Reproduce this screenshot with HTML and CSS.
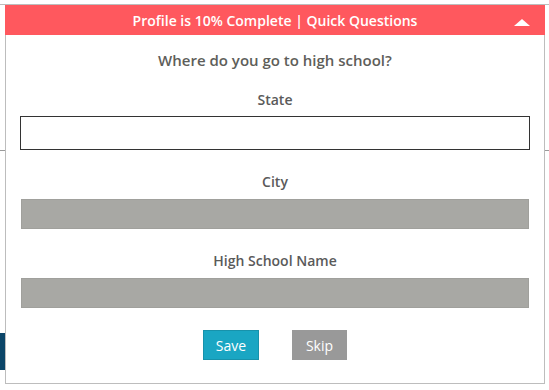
FILE: index.html
```html
<!DOCTYPE html>
<html lang="en">
<head>
    <meta charset="UTF-8">
    <meta name="viewport" content="width=device-width, initial-scale=1.0">
    <title>Quick Questions</title>
    <link rel="stylesheet" href="styles.css">
</head>
<body>
    <div class="page">
        <div class="page-top"></div>
        <div class="page-section"></div>
        <div class="page-tab"></div>
    </div>

    <div class="panel">
        <div class="panel-head">
            <span>Profile is 10% Complete | Quick Questions</span>
            <span class="collapse-arrow"></span>
        </div>
        <div class="panel-body">
            <h2 class="question">Where do you go to high school?</h2>
            <div class="field">
                <label for="state">State</label>
                <input type="text" id="state" class="state-input">
            </div>
            <div class="field">
                <label for="city">City</label>
                <input type="text" id="city" class="locked-input" disabled>
            </div>
            <div class="field">
                <label for="school">High School Name</label>
                <input type="text" id="school" class="locked-input" disabled>
            </div>
            <div class="actions">
                <button class="save-button">Save</button>
                <button class="skip-button">Skip</button>
            </div>
        </div>
    </div>
</body>
</html>
```
FILE: styles.css
```css
body {
    margin: 0;
    font-family: "Open Sans", "Noto Sans", sans-serif;
    background-color: #fff;
}
.page {
    height: 390px;
}
.page-top {
    height: 4px;
    border-bottom: 1px solid #bcbcbc;
}
.page-section {
    height: 145px;
    border-bottom: 1px solid #9a9a9a;
}
.page-tab {
    margin-top: 182px;
    width: 5px;
    height: 37px;
    background-color: #0b4568;
}
.panel {
    position: absolute;
    top: 5px;
    left: 5px;
    width: 540px;
    background-color: #fff;
}
.panel-head {
    position: relative;
    height: 30px;
    display: flex;
    align-items: center;
    justify-content: center;
    background-color: #ff585e;
    color: #fff;
    font-size: 14px;
    font-weight: 600;
}
.collapse-arrow {
    position: absolute;
    right: 15px;
    top: 14px;
    width: 0;
    height: 0;
    border-left: 8px solid transparent;
    border-right: 8px solid transparent;
    border-bottom: 7px solid #fff;
}
.panel-body {
    height: 349px;
    border: 1px solid #bdbdbd;
    border-top: none;
    padding: 15px 14px 0;
    box-sizing: border-box;
}
.question {
    margin: 0 0 20px;
    text-align: center;
    font-size: 15px;
    font-weight: 600;
    line-height: 20px;
    color: #5e5e5a;
}
.field {
    display: flex;
    flex-direction: column;
    margin-bottom: 22px;
}
.field label {
    text-align: center;
    font-size: 14px;
    font-weight: 600;
    line-height: 20px;
    color: #5a5a5a;
    margin-bottom: 7px;
}
.field input {
    margin: 0;
    box-sizing: border-box;
    height: 30px;
}
.state-input {
    height: 34px !important;
    margin-top: -1px !important;
    border: 1px solid #333;
    background-color: #fff;
}
.locked-input {
    border: 1px solid #a0a09c;
    background-color: #a8a8a4;
    margin: 0 1px !important;
}
.actions {
    display: flex;
    justify-content: center;
    gap: 33px;
    margin-top: 8px;
}
.actions button {
    height: 30px;
    padding: 0;
    font-family: inherit;
    font-size: 14px;
    color: #fff;
    cursor: pointer;
}
.save-button {
    width: 56px;
    background-color: #1aa6c3;
    border: 1px solid #1792ab;
}
.skip-button {
    width: 55px;
    background-color: #999;
    border: 1px solid #999;
}
```
